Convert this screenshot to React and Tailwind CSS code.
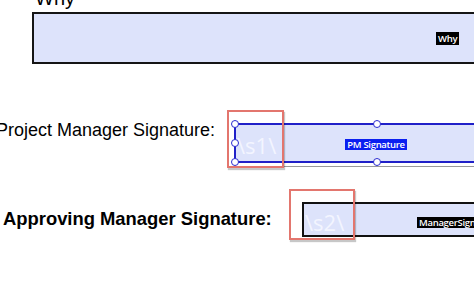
import React from 'react';

const fieldBg = 'bg-[#dde3fb]';

const Handle = ({ className }) => (
  <span
    className={`absolute w-[8px] h-[8px] rounded-full bg-white border-[1.5px] border-[#2a2ad0] -translate-x-1/2 -translate-y-1/2 ${className}`}
  />
);

const Marker = ({ className }) => (
  <div
    className={`absolute border-2 border-[#e3766e] shadow-[1px_2px_1px_rgba(0,0,0,0.22)] pointer-events-none ${className}`}
  />
);

const Tag = ({ children, className }) => (
  <span
    className={`inline-block px-[2px] text-[9.5px] leading-[11px] font-semibold tracking-[-0.3px] text-white whitespace-nowrap ${className}`}
    style={{ fontFamily: '"Open Sans", "Noto Sans", sans-serif' }}
  >
    {children}
  </span>
);

const Placeholder = ({ children }) => (
  <span
    className="shrink-0 pl-[1px] text-[22px] leading-[22px] text-[#f3f5ff]"
    style={{ fontFamily: '"Open Sans", "Noto Sans", sans-serif' }}
  >
    {children}
  </span>
);

export default function App() {
  return (
    <div
      className="relative w-[474px] h-[301px] bg-white overflow-hidden text-black"
      style={{ fontFamily: '"Liberation Sans", Arial, sans-serif' }}
    >
      {/* Why field */}
      <div className="flex flex-col">
        <div className="ml-[35px] mt-[-12px] text-[20px] leading-[20px]">Why</div>
        <div className={`ml-[32px] mt-[4px] w-[460px] h-[52px] border-2 border-[#151515] ${fieldBg} flex items-center`}>
          <Tag className="ml-[402px] bg-black py-[1px]">Why</Tag>
        </div>
      </div>

      {/* Project manager signature */}
      <div className="relative flex mt-[46px] h-[60px]">
        <div className="shrink-0 ml-[-4px] w-[238px] mt-[10px] text-[18px] leading-[20px] whitespace-nowrap">
          Project Manager Signature:
        </div>
        <div className={`relative shrink-0 mt-[13px] w-[284px] h-[40px] border-2 border-[#2020c8] ${fieldBg} grid grid-cols-[1fr_auto_1fr] items-center`}>
          <div className="flex pt-[3px]">
            <Placeholder>\s1\</Placeholder>
          </div>
          <Tag className="bg-[#0a1ff0] mt-[2px]">PM Signature</Tag>
          <div />
          <Handle className="left-[-1px] top-[-1px]" />
          <Handle className="left-[141px] top-[-1px]" />
          <Handle className="left-[-1px] top-[18px]" />
          <Handle className="left-[-1px] top-[37px]" />
          <Handle className="left-[141px] top-[37px]" />
          <div className="absolute left-0 right-[-40px] top-[41px] h-px bg-[#9a9a9a]" />
        </div>
        <Marker className="left-[227px] top-0 w-[57px] h-[58px]" />
      </div>

      {/* Approving manager signature */}
      <div className="relative flex mt-[19px] h-[55px]">
        <div className="shrink-0 ml-[3px] w-[299px] mt-[20px] text-[18.4px] leading-[20px] font-bold whitespace-nowrap">
          Approving Manager Signature:
        </div>
        <div className={`shrink-0 mt-[13px] w-[300px] h-[35px] border-2 border-[#111] ${fieldBg} flex items-center`}>
          <div className="w-[113px] flex pt-[4px]">
            <Placeholder>\s2\</Placeholder>
          </div>
          <Tag className="mt-[6px] bg-black">ManagerSignature</Tag>
        </div>
        <Marker className="left-[289px] top-0 w-[66px] h-[51px]" />
      </div>
    </div>
  );
}
